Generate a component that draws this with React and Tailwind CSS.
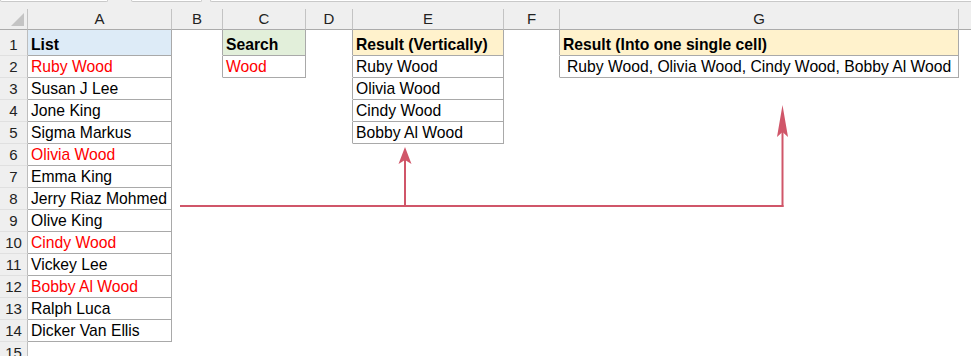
import React from "react";

const cols = ["A", "B", "C", "D", "E", "F", "G"];

const cells = {
  A1: { text: "List", bold: true, bg: "bg-[#ddebf7]" },
  A2: { text: "Ruby Wood", red: true },
  A3: { text: "Susan J Lee" },
  A4: { text: "Jone King" },
  A5: { text: "Sigma Markus" },
  A6: { text: "Olivia Wood", red: true },
  A7: { text: "Emma King" },
  A8: { text: "Jerry Riaz Mohmed" },
  A9: { text: "Olive King" },
  A10: { text: "Cindy Wood", red: true },
  A11: { text: "Vickey Lee" },
  A12: { text: "Bobby Al Wood", red: true },
  A13: { text: "Ralph Luca" },
  A14: { text: "Dicker Van Ellis" },
  C1: { text: "Search", bold: true, bg: "bg-[#e2efda]" },
  C2: { text: "Wood", red: true },
  E1: { text: "Result (Vertically)", bold: true, bg: "bg-[#fff2cc]" },
  E2: { text: "Ruby Wood" },
  E3: { text: "Olivia Wood" },
  E4: { text: "Cindy Wood" },
  E5: { text: "Bobby Al Wood" },
  G1: { text: "Result (Into one single cell)", bold: true, bg: "bg-[#fff2cc]" },
  G2: { text: "Ruby Wood, Olivia Wood, Cindy Wood, Bobby Al Wood", indent: true },
};

// cells that carry a thin border
const boxed = new Set([
  ...Array.from({ length: 14 }, (_, i) => "A" + (i + 1)),
  "C1", "C2",
  "E1", "E2", "E3", "E4", "E5",
  "G1", "G2",
]);

const isBoxed = (ci, r) => ci >= 0 && ci < cols.length && boxed.has(cols[ci] + r);

const rows = Array.from({ length: 15 }, (_, i) => i + 1);

function Cell({ ci, r }) {
  const key = cols[ci] + r;
  const c = cells[key] || {};
  const right = isBoxed(ci, r) || isBoxed(ci + 1, r) ? "border-r-[#a9a9a9]" : "border-r-white";
  const bottom = isBoxed(ci, r) || isBoxed(ci, r + 1) ? "border-b-[#a9a9a9]" : "border-b-white";
  return (
    <div
      className={`${r === 1 ? "h-[26px]" : "h-[22px]"} border-r border-b ${right} ${bottom} ${c.bg || "bg-white"} flex items-end overflow-visible whitespace-nowrap ${c.indent ? "pl-[7px]" : "pl-[3px]"}`}
    >
      <span
        className={`leading-[21px] ${c.bold ? "font-bold" : ""} ${c.red ? "text-[#ff0000]" : "text-black"}`}
      >
        {c.text}
      </span>
    </div>
  );
}

export default function App() {
  return (
    <div className="relative w-[971px] h-[356px] overflow-hidden bg-white font-['Liberation_Sans',Arial,sans-serif] text-[15.7px]">
      {/* strip under the formula bar */}
      <div className="h-[9px] bg-[#efefef] flex gap-[23px]">
        <div className="w-[108px] h-[2px] bg-white border border-t-0 border-[#c9c9c9] rounded-b-[2px]"></div>
        <div className="flex gap-[8px] flex-1">
          <div className="w-[71px] h-[2px] bg-white border border-t-0 border-[#c9c9c9] rounded-b-[2px]"></div>
          <div className="flex-1 h-[2px] bg-white border border-t-0 border-r-0 border-[#c9c9c9] rounded-bl-[2px]"></div>
        </div>
      </div>

      <div className="grid grid-cols-[28px_144px_51px_83px_47px_151px_56px_399px_1fr]">
        {/* column headers */}
        <div className="h-[21px] bg-[#efefef] border-r border-b border-r-[#c3c3c3] border-b-[#ababab] flex items-end justify-end pr-[3px] pb-[3px]">
          <svg width="13" height="13" viewBox="0 0 13 13">
            <polygon points="13,0 13,13 0,13" fill="#c4c4c4" />
          </svg>
        </div>
        {cols.map((c) => (
          <div
            key={c}
            className="h-[21px] bg-[#efefef] border-r border-b border-r-[#c3c3c3] border-b-[#ababab] flex items-center justify-center text-[15px] text-[#222]"
          >
            {c}
          </div>
        ))}
        <div className="h-[21px] bg-[#efefef] border-b border-b-[#ababab]"></div>

        {rows.map((r) => (
          <React.Fragment key={r}>
            <div
              className={`${r === 1 ? "h-[26px]" : "h-[22px]"} bg-[#efefef] border-r border-b border-r-[#bdbdbd] border-b-[#e0e0e0] flex items-end justify-center text-[15px] leading-[21px] text-[#222]`}
            >
              {r}
            </div>
            {cols.map((c, ci) => (
              <Cell key={c + r} ci={ci} r={r} />
            ))}
            <div className={`${r === 1 ? "h-[26px]" : "h-[22px]"} bg-white`}></div>
          </React.Fragment>
        ))}
      </div>

      {/* connector arrows */}
      <svg className="absolute inset-0 pointer-events-none" width="971" height="356" viewBox="0 0 971 356">
        <g stroke="#d05669" strokeWidth="2" fill="none">
          <line x1="180" y1="206" x2="783.5" y2="206" />
          <line x1="405" y1="207" x2="405" y2="159" />
          <line x1="782.5" y1="207" x2="782.5" y2="131" />
        </g>
        <polygon points="405,147 411.5,164 405,160 398.5,164" fill="#d05669" />
        <polygon points="782.5,105 788,137 782.5,132 777,137" fill="#d05669" />
      </svg>
    </div>
  );
}
